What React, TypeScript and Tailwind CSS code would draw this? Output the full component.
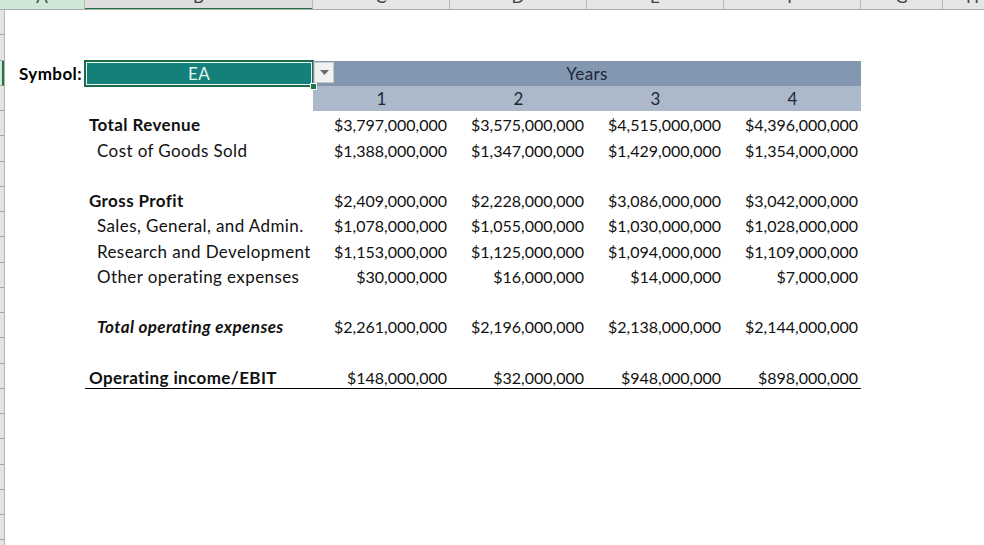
import React from "react";

type DataRow =
  | { kind: "empty" }
  | { kind: "data"; label: string; style: "bold" | "indent" | "boldItalic" | "boldLine"; values: string[] };

const rows: DataRow[] = [
  { kind: "data", label: "Total Revenue", style: "bold", values: ["$3,797,000,000", "$3,575,000,000", "$4,515,000,000", "$4,396,000,000"] },
  { kind: "data", label: "Cost of Goods Sold", style: "indent", values: ["$1,388,000,000", "$1,347,000,000", "$1,429,000,000", "$1,354,000,000"] },
  { kind: "empty" },
  { kind: "data", label: "Gross Profit", style: "bold", values: ["$2,409,000,000", "$2,228,000,000", "$3,086,000,000", "$3,042,000,000"] },
  { kind: "data", label: "Sales, General, and Admin.", style: "indent", values: ["$1,078,000,000", "$1,055,000,000", "$1,030,000,000", "$1,028,000,000"] },
  { kind: "data", label: "Research and Development", style: "indent", values: ["$1,153,000,000", "$1,125,000,000", "$1,094,000,000", "$1,109,000,000"] },
  { kind: "data", label: "Other operating expenses", style: "indent", values: ["$30,000,000", "$16,000,000", "$14,000,000", "$7,000,000"] },
  { kind: "empty" },
  { kind: "data", label: "Total operating expenses", style: "boldItalic", values: ["$2,261,000,000", "$2,196,000,000", "$2,138,000,000", "$2,144,000,000"] },
  { kind: "empty" },
  { kind: "data", label: "Operating income/EBIT", style: "boldLine", values: ["$148,000,000", "$32,000,000", "$948,000,000", "$898,000,000"] },
];

// heights of rows starting at y=10
const heights = [25, 26, 25, 25, 25, 26, 25, 25, 25, 26, 25, 25, 25, 26, 25, 25, 25, 26, 25, 25, 25, 25];

function hClass(i: number) {
  return heights[i] === 26 ? "h-[26px]" : "h-[25px]";
}

function ColHeader() {
  const cols = [
    { l: "A", w: "w-[85px]", extra: "bg-[#cfe8d6]" },
    { l: "B", w: "w-[228px]", extra: "bg-[#dedede] border-b-2 border-b-[#217346]" },
    { l: "C", w: "w-[137px]", extra: "" },
    { l: "D", w: "w-[137px]", extra: "" },
    { l: "E", w: "w-[137px]", extra: "" },
    { l: "F", w: "w-[137px]", extra: "" },
    { l: "G", w: "w-[82px]", extra: "" },
    { l: "H", w: "w-[60px]", extra: "" },
  ];
  return (
    <div className="h-[10px] overflow-hidden bg-[#e6e6e6] border-b border-[#a9a9a9] flex">
      {cols.map((c) => (
        <div
          key={c.l}
          className={`${c.w} shrink-0 h-[10px] border-r border-[#b9b9b9] relative overflow-hidden ${c.extra}`}
        >
          <div className="absolute left-0 right-0 top-[-16px] h-[26px] flex items-center justify-center text-[17px] text-[#444]">
            {c.l}
          </div>
        </div>
      ))}
    </div>
  );
}

function Cell({ className = "", children }: { className?: string; children?: React.ReactNode }) {
  return <div className={`shrink-0 h-full flex items-center pt-[3px] ${className}`}>{children}</div>;
}

export default function App() {
  const allRows: React.ReactNode[] = [];
  allRows.push(<div key="r0" className={`${hClass(0)}`} />);
  allRows.push(<div key="r1" className={`${hClass(1)}`} />);
  allRows.push(
    <div key="r2" className={`${hClass(2)} flex`}>
      <div className="w-[80px] shrink-0 h-full flex items-center pt-[1px] justify-end pr-[3px] font-bold text-[17px] tracking-[0.4px] text-black">
        Symbol:
      </div>
      <div className="w-[228px] shrink-0 h-full relative bg-[#13807a] flex items-center justify-center text-[17px] tracking-[0.4px] text-[#e2f4f1]">
        EA
        <div className="absolute left-[-1px] right-[-1px] top-[-1px] bottom-[-1px] border-2 border-[#1d6b48]" />
        <div className="absolute left-[1px] right-[1px] top-[1px] bottom-[1px] border border-[#e8f4ef]" />
        <div className="absolute right-[-4px] bottom-[-4px] w-[7px] h-[7px] bg-[#217346] border border-white z-10" />
      </div>
      <div className="w-[548px] shrink-0 h-full relative bg-[#8497b0] flex items-center justify-center text-[17px] tracking-[0.4px] text-[#1c2736]">
        Years
        <div className="absolute left-[1px] top-[1px] w-[20px] h-[21px] bg-[#f2f2f2] border border-[#c9c9c9] flex items-center justify-center">
          <svg width="9" height="5" viewBox="0 0 9 5">
            <polygon points="0,0 9,0 4.5,5" fill="#6b6b6b" />
          </svg>
        </div>
      </div>
    </div>
  );
  allRows.push(
    <div key="r3" className={`${hClass(3)} flex`}>
      <div className="w-[308px] shrink-0" />
      {["1", "2", "3", "4"].map((n) => (
        <div key={n} className="w-[137px] shrink-0 h-full flex items-center justify-center pt-[1px] bg-[#acb9ca] text-[17px] text-[#1c2736]">
          {n}
        </div>
      ))}
    </div>
  );
  rows.forEach((r, idx) => {
    const i = idx + 4;
    if (r.kind === "empty") {
      allRows.push(<div key={`r${i}`} className={hClass(i)} />);
      return;
    }
    const line = r.style === "boldLine";
    const labelCls =
      r.style === "bold" || r.style === "boldLine"
        ? "pl-[4px] font-bold"
        : r.style === "boldItalic"
        ? "pl-[12px] font-bold italic"
        : "pl-[12px]";
    allRows.push(
      <div key={`r${i}`} className={`${hClass(i)} flex`}>
        <div className="w-[80px] shrink-0" />
        <div className={`flex h-full ${line ? "border-b border-black" : ""}`}>
          <Cell className={`w-[228px] whitespace-nowrap text-[17px] tracking-[0.4px] ${labelCls}`}>{r.label}</Cell>
          {r.values.map((v, k) => (
            <Cell key={k} className="w-[137px] justify-end pr-[3px] whitespace-nowrap">
              {v}
            </Cell>
          ))}
        </div>
      </div>
    );
  });
  for (let i = allRows.length; i < heights.length; i++) {
    allRows.push(<div key={`r${i}`} className={hClass(i)} />);
  }

  return (
    <div className="w-[984px] h-[545px] overflow-hidden bg-white font-['Lato',_sans-serif] text-[16px] text-[#111] relative">
      <ColHeader />
      <div className="flex">
        <div className="w-[5px] shrink-0 bg-[#e4e4e4] border-r border-[#b5b5b5] flex flex-col">
          {heights.map((_, i) => (
            <div
              key={i}
              className={`${hClass(i)} shrink-0 border-b border-[#a8a8a8] ${i === 2 ? "bg-[#cfe8d6] border-r-2 border-r-[#217346]" : ""}`}
            />
          ))}
        </div>
        <div className="flex flex-col">{allRows}</div>
      </div>
    </div>
  );
}
